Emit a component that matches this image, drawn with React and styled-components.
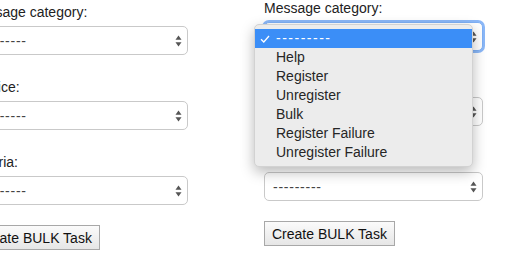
import React from 'react'
import styled, { createGlobalStyle } from 'styled-components'

const GlobalStyle = createGlobalStyle`
  html, body {
    margin: 0;
    padding: 0;
    background: #ffffff;
    overflow: hidden;
  }
  body {
    font-family: "Liberation Sans", Arial, sans-serif;
    color: #222;
  }
`

const Page = styled.div`
  display: flex;
  align-items: flex-start;
  gap: 76px;
  margin-left: -31px;
  width: 600px;
  height: 272px;
`

const Panel = styled.form`
  position: relative;
  display: flex;
  flex-direction: column;
  width: 219px;
  margin-top: ${p => p.$offset || 0}px;
`

const Field = styled.div`
  display: flex;
  flex-direction: column;
  gap: 6px;
  margin-bottom: ${p => (p.$last ? 20 : 24)}px;
`

const Label = styled.label`
  font-size: 14px;
  line-height: 16px;
  height: 16px;
  white-space: nowrap;
  color: #222;
`

const SelectBox = styled.div`
  position: relative;
  box-sizing: border-box;
  height: 29px;
  display: flex;
  align-items: center;
  justify-content: space-between;
  padding: 0 5px 0 8px;
  background: #fff;
  border: 1px solid ${p => (p.$focused ? '#7eb0f5' : '#c9c9c9')};
  border-radius: 5px;
  box-shadow: ${p => (p.$focused ? '0 0 0 2px rgba(100, 160, 245, 0.75)' : 'none')};
  font-size: 14px;
  color: #444;
`

const Dashes = styled.span`
  letter-spacing: 0.75px;
  font-size: 14px;
`

const Button = styled.button`
  align-self: flex-start;
  box-sizing: border-box;
  height: 25px;
  padding: 0 7px;
  font-family: "Liberation Sans", Arial, sans-serif;
  font-size: 14px;
  color: #111;
  background: linear-gradient(#fbfbfb, #e6e6e6);
  border: 1px solid #a8a8a8;
  border-radius: 0;
`

const Menu = styled.ul`
  position: absolute;
  left: -10px;
  top: 24px;
  width: 219px;
  box-sizing: border-box;
  margin: 0;
  padding: 4px 0;
  list-style: none;
  background: #ececec;
  border: 1px solid #d2d2d2;
  border-radius: 5px;
  box-shadow: 0 5px 14px rgba(0, 0, 0, 0.28);
  z-index: 5;
`

const MenuItem = styled.li`
  position: relative;
  height: 19px;
  line-height: 19px;
  padding-left: 21px;
  font-size: 14px;
  color: ${p => (p.$active ? '#fff' : '#262626')};
  background: ${p => (p.$active ? '#3b8ef7' : 'transparent')};
  letter-spacing: ${p => (p.$dash ? '1.5px' : '0')};
`

const Check = styled.span`
  position: absolute;
  left: 5px;
  top: 0;
  display: flex;
  align-items: center;
  height: 19px;
`

const Arrows = () => (
  <svg width="7" height="12" viewBox="0 0 7 12">
    <path d="M3.5 0.5 L6.5 4.8 L0.5 4.8 Z" fill="#555" />
    <path d="M3.5 11.5 L6.5 7.2 L0.5 7.2 Z" fill="#555" />
  </svg>
)

const Select = ({ focused }) => (
  <SelectBox $focused={focused}>
    <Dashes>---------</Dashes>
    <Arrows />
  </SelectBox>
)

const options = ['Help', 'Register', 'Unregister', 'Bulk', 'Register Failure', 'Unregister Failure']

const Form = ({ offset, open }) => (
  <Panel $offset={offset}>
    <Field>
      <Label>Message category:</Label>
      <Select focused={open} />
    </Field>
    <Field>
      <Label>Service:</Label>
      <Select />
    </Field>
    <Field $last>
      <Label>Criteria:</Label>
      <Select />
    </Field>
    <Button type="button">Create BULK Task</Button>
    {open && (
      <Menu>
        <MenuItem $active $dash>
          <Check>
            <svg width="10" height="8" viewBox="0 0 10 8">
              <path d="M1 4.2 L3.8 7 L9 1" fill="none" stroke="#fff" strokeWidth="1.3" />
            </svg>
          </Check>
          ---------
        </MenuItem>
        {options.map(o => (
          <MenuItem key={o}>{o}</MenuItem>
        ))}
      </Menu>
    )}
  </Panel>
)

export default function App() {
  return (
    <>
      <GlobalStyle />
      <Page>
        <Form offset={4} />
        <Form open />
      </Page>
    </>
  )
}
